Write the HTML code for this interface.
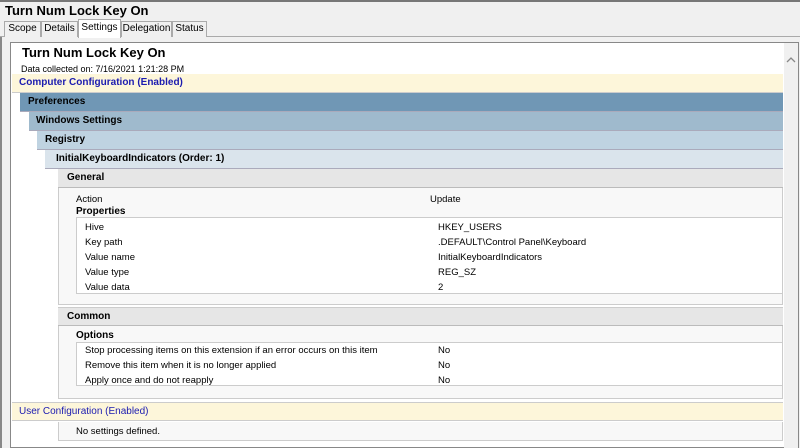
<!DOCTYPE html>
<html><head><style>
*{margin:0;padding:0;box-sizing:border-box}
body{width:800px;height:448px;overflow:hidden;background:#f0f0f0;font-family:"Liberation Sans",sans-serif;font-size:10px;color:#000;position:relative}
.a{position:absolute;white-space:nowrap}
.bar{position:absolute;height:19px;line-height:18px;font-weight:bold;font-size:10px;border-bottom:1px solid #aab;}
.tab{position:absolute;top:21px;height:16px;border:1px solid #aaa;border-bottom:none;background:#f0f0f0;font-size:10px;line-height:14px;text-align:center}
</style></head><body>
<div class="a" style="left:0;top:0;width:800px;height:2px;background:#777"></div>
<div class="a" style="left:5px;top:3px;font-size:13px;font-weight:bold">Turn Num Lock Key On</div>
<div class="a" style="left:0;top:36px;width:800px;height:1px;background:#aaa"></div>
<div class="tab" style="left:4px;width:37px">Scope</div>
<div class="tab" style="left:41px;width:37px">Details</div>
<div class="tab" style="left:78px;top:19px;height:19px;width:43px;background:#fff;line-height:16px">Settings</div>
<div class="tab" style="left:121px;width:51px">Delegation</div>
<div class="tab" style="left:172px;width:35px">Status</div>
<div class="a" style="left:0;top:37px;width:2px;height:411px;background:#888"></div>
<div class="a" style="left:10px;top:42px;width:789px;height:406px;border:1px solid #888;background:#fff"></div>
<div class="a" style="left:784px;top:43px;width:14px;height:405px;background:#f0f0f0"></div>
<svg class="a" style="left:785px;top:56px" width="12" height="8"><path d="M2 6 L6 2 L10 6" stroke="#888" fill="none" stroke-width="1.3"/></svg>
<div class="a" style="left:22px;top:45px;font-size:13px;font-weight:bold">Turn Num Lock Key On</div>
<div class="a" style="left:21px;top:64px;font-size:9px">Data collected on: 7/16/2021 1:21:28 PM</div>
<div class="bar" style="left:12px;top:74px;width:771px;background:#fdf6da;color:#1b1bb0;border-bottom:1px solid #ccc"><span style="padding-left:7px">Computer Configuration (Enabled)</span></div>
<div class="bar" style="left:20px;top:93px;width:763px;background:#7097b5;padding-left:8px">Preferences</div>
<div class="bar" style="left:29px;top:112px;width:754px;background:#9fbacd;padding-left:7px">Windows Settings</div>
<div class="bar" style="left:37px;top:131px;width:746px;background:#bfd3e1;padding-left:8px">Registry</div>
<div class="bar" style="left:45px;top:150px;width:738px;background:#dae4ec;padding-left:11px">InitialKeyboardIndicators (Order: 1)</div>
<div class="bar" style="left:58px;top:169px;width:725px;background:#e6e6e6;padding-left:9px;border-bottom:1px solid #bbb">General</div>
<div class="a" style="left:58px;top:188px;width:725px;height:117px;background:#f8f8f8;border-left:1px solid #ccc;border-right:1px solid #ccc;border-bottom:1px solid #ccc"></div>
<div class="a" style="left:76px;top:194px;font-size:9.5px">Action</div><div class="a" style="left:430px;top:194px;font-size:9.5px">Update</div>
<div class="a" style="left:76px;top:206px;font-weight:bold">Properties</div>
<div class="a" style="left:76px;top:217px;width:707px;height:77px;background:#fff;border:1px solid #ccc"></div>
<div class="a" style="left:85px;top:220px;line-height:15px;font-size:9.5px">Hive<br>Key path<br>Value name<br>Value type<br>Value data</div>
<div class="a" style="left:438px;top:220px;line-height:15px;font-size:9.5px">HKEY_USERS<br>.DEFAULT\Control Panel\Keyboard<br>InitialKeyboardIndicators<br>REG_SZ<br>2</div>
<div class="bar" style="left:58px;top:307px;width:725px;background:#e6e6e6;padding-left:9px;border-bottom:1px solid #bbb;border-top:1px solid #ccc">Common</div>
<div class="a" style="left:58px;top:326px;width:725px;height:73px;background:#f8f8f8;border-left:1px solid #ccc;border-right:1px solid #ccc;border-bottom:1px solid #ccc"></div>
<div class="a" style="left:76px;top:330px;font-weight:bold">Options</div>
<div class="a" style="left:76px;top:342px;width:707px;height:44px;background:#fff;border:1px solid #ccc"></div>
<div class="a" style="left:85px;top:343px;line-height:15px;font-size:9.5px">Stop processing items on this extension if an error occurs on this item<br>Remove this item when it is no longer applied<br>Apply once and do not reapply</div>
<div class="a" style="left:438px;top:343px;line-height:15px;font-size:9.5px">No<br>No<br>No</div>
<div class="bar" style="left:12px;top:402px;width:771px;background:#fdf6da;color:#1b1bb0;border-top:1px solid #ccc;border-bottom:1px solid #ccc;font-weight:normal"><span style="padding-left:7px">User Configuration (Enabled)</span></div>
<div class="a" style="left:58px;top:422px;width:725px;height:19px;background:#f8f8f8;border-left:1px solid #ccc;border-right:1px solid #ccc;border-bottom:1px solid #ccc"></div>
<div class="a" style="left:76px;top:426px;font-size:9.5px">No settings defined.</div>
</body></html>
